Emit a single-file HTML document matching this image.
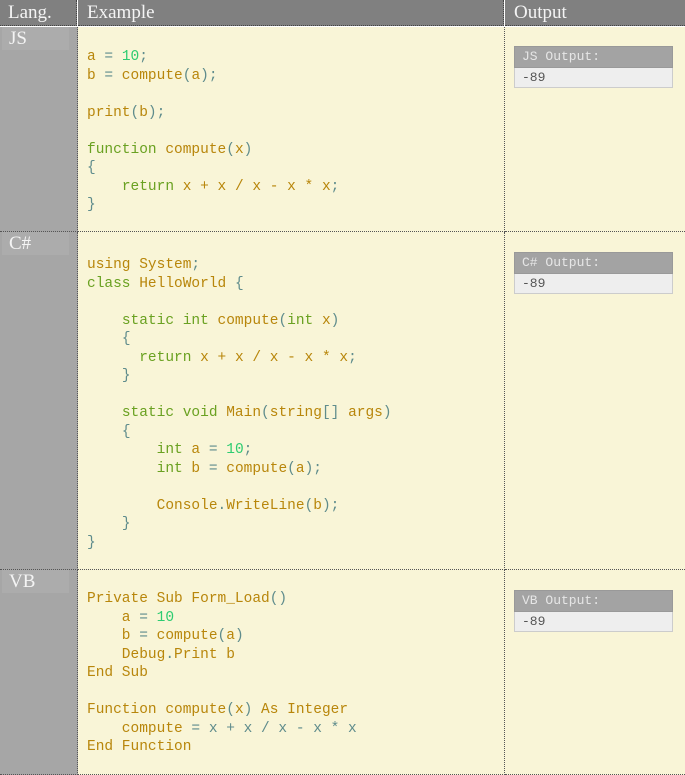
<!DOCTYPE html>
<html><head><style>
body{margin:0;width:685px;height:775px;background:#fff;position:relative;overflow:hidden;font-family:"Liberation Serif",serif}
.a{position:absolute}
.hd{background:#808080;color:#f4f4f4;font-size:19px;top:0;height:26px;line-height:26px;border-bottom:1px dotted #444}
.lang{background:#a6a6a6;left:0;width:77px;border-right:1px dotted #555;border-bottom:1px dotted #555}
.lbl{position:absolute;left:2px;top:0;width:67px;height:23px;background:#acacac;color:#f4f4f4;font-size:19px;line-height:24px;padding-left:7px;box-sizing:border-box}
.ex{background:#f9f5d7;left:78px;width:426px;border-right:1px dotted #555;border-bottom:1px dotted #555}
.out{background:#f9f5d7;left:505px;width:180px;border-bottom:1px dotted #555}
pre{margin:0;position:absolute;left:9px;font-family:"Liberation Mono",monospace;font-size:14.5px;line-height:18.5px;color:#b8860b}
.n{color:#2ecc71}.p{color:#5f8c8c}.k{color:#6aa121}
.box{position:absolute;left:9px;width:159px;font-family:"Liberation Mono",monospace;font-size:13px}
.bt{background:#a3a3a3;color:#e6e6e6;height:20px;line-height:20px;padding-left:7px;border:1px solid #999}
.bv{background:#eee;color:#555;height:19px;line-height:19px;padding-left:7px;border:1px solid #ccc;border-top:none}
</style></head><body>
<div class="a hd" style="left:0;width:77px;padding-left:8px;box-sizing:border-box;border-right:1px dotted #444">Lang.</div>
<div class="a hd" style="left:78px;width:426px;padding-left:9px;box-sizing:border-box;border-right:1px dotted #444">Example</div>
<div class="a hd" style="left:505px;width:180px;padding-left:9px;box-sizing:border-box">Output</div>

<div class="a lang" style="top:27px;height:204px"><div class="lbl">JS</div></div>
<div class="a ex" style="top:27px;height:204px"><pre style="top:21px">a <span class="p">=</span> <span class="n">10</span><span class="p">;</span>
b <span class="p">=</span> compute<span class="p">(</span>a<span class="p">);</span>

print<span class="p">(</span>b<span class="p">);</span>

<span class="k">function</span> compute<span class="p">(</span>x<span class="p">)</span>
<span class="p">{</span>
    <span class="k">return</span> x + x / x - x * x<span class="p">;</span>
<span class="p">}</span></pre></div>
<div class="a out" style="top:27px;height:204px"><div class="box" style="top:19px"><div class="bt">JS Output:</div><div class="bv">-89</div></div></div>

<div class="a lang" style="top:232px;height:337px"><div class="lbl">C#</div></div>
<div class="a ex" style="top:232px;height:337px"><pre style="top:24px">using System<span class="p">;</span>
<span class="k">class</span> HelloWorld <span class="p">{</span>

    <span class="k">static int</span> compute<span class="p">(</span><span class="k">int</span> x<span class="p">)</span>
    <span class="p">{</span>
      <span class="k">return</span> x + x / x - x * x<span class="p">;</span>
    <span class="p">}</span>

    <span class="k">static void</span> Main<span class="p">(</span>string<span class="p">[]</span> args<span class="p">)</span>
    <span class="p">{</span>
        <span class="k">int</span> a <span class="p">=</span> <span class="n">10</span><span class="p">;</span>
        <span class="k">int</span> b <span class="p">=</span> compute<span class="p">(</span>a<span class="p">);</span>

        Console<span class="p">.</span>WriteLine<span class="p">(</span>b<span class="p">);</span>
    <span class="p">}</span>
<span class="p">}</span></pre></div>
<div class="a out" style="top:232px;height:337px"><div class="box" style="top:20px"><div class="bt">C# Output:</div><div class="bv">-89</div></div></div>

<div class="a lang" style="top:570px;height:204px"><div class="lbl">VB</div></div>
<div class="a ex" style="top:570px;height:204px"><pre style="top:20px">Private Sub Form_Load<span class="p">()</span>
    a <span class="p">=</span> <span class="n">10</span>
    b <span class="p">=</span> compute<span class="p">(</span>a<span class="p">)</span>
    Debug<span class="p">.</span>Print b
End Sub

Function compute<span class="p">(</span>x<span class="p">)</span> As Integer
    compute <span class="p">= x + x / x - x * x</span>
End Function</pre></div>
<div class="a out" style="top:570px;height:204px"><div class="box" style="top:20px"><div class="bt">VB Output:</div><div class="bv">-89</div></div></div>
</body></html>
